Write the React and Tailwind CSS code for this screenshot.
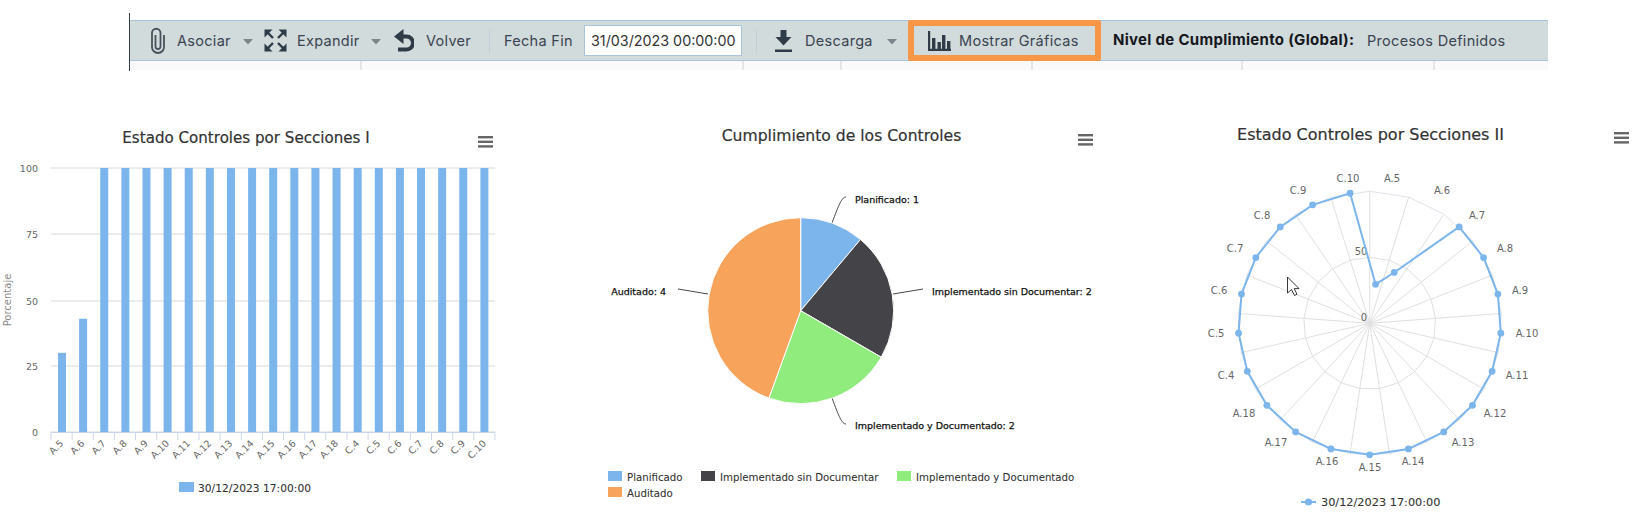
const BLUE = "#7cb5ec";
const DARK = "#434348";
const GREEN = "#90ed7d";
const ORANGE = "#f7a35c";

const CATEGORIES = [
  "A.5", "A.6", "A.7", "A.8", "A.9", "A.10", "A.11", "A.12", "A.13", "A.14", "A.15",
  "A.16", "A.17", "A.18", "C.4", "C.5", "C.6", "C.7", "C.8", "C.9", "C.10",
];
const VALUES = CATEGORIES.map((_, i) => (i === 0 ? 30 : i === 1 ? 42.9 : 100));

// posicion de las etiquetas del radar, en coordenadas de pagina
const RADAR_LABELS = [
  [1392, 178], [1442, 190], [1477, 215], [1505, 248], [1520, 290], [1527, 333], [1517, 375],
  [1495, 413], [1463, 442], [1413, 461], [1370, 467], [1327, 461], [1276, 442], [1244, 413],
  [1226, 375], [1216, 333], [1219, 290], [1235, 248], [1262, 215], [1298, 190], [1348, 178],
];

function Caret() {
  return (
    <svg width="10" height="6" viewBox="0 0 10 6" className="shrink-0 mt-[3px]">
      <polygon points="0,0 10,0 5,5.5" fill="#7b868c" />
    </svg>
  );
}

function ClipIcon() {
  return (
    <svg width="16" height="27" viewBox="0 0 16 27" className="shrink-0" fill="none" stroke="#47525a" strokeWidth="1.8">
      <path d="M5.5 8V19.5a2.5 2.5 0 0 0 5 0V6a4.2 4.2 0 0 0-8.5 0V20a6 6 0 0 0 12 0V8" />
    </svg>
  );
}

function ExpandIcon() {
  return (
    <svg width="23" height="23" viewBox="0 0 23 23" className="shrink-0" fill="#2f3b47" stroke="#2f3b47">
      {[0, 90, 180, 270].map((r) => (
        <g key={r} transform={`rotate(${r} 11.5 11.5)`}>
          <polygon points="0.5,0.5 8.5,0.5 0.5,8.5" strokeWidth="0" />
          <path d="M3 3L9 9" strokeWidth="2.4" />
        </g>
      ))}
    </svg>
  );
}

function BackIcon() {
  return (
    <svg width="20" height="23" viewBox="0 0 20 23" className="shrink-0">
      <polygon points="0,7.5 9.5,0 9.5,15" fill="#2f3b47" />
      <path d="M8 7.5H12.5a6 6 0 0 1 0 13H4" fill="none" stroke="#2f3b47" strokeWidth="4" />
    </svg>
  );
}

function DownloadIcon() {
  return (
    <svg width="17" height="22" viewBox="0 0 17 22" className="shrink-0">
      <polygon points="5.5,0 11.5,0 11.5,7 16.5,7 8.5,15.5 0.5,7 5.5,7" fill="#2f3b47" />
      <rect x="0" y="19.5" width="17" height="2.5" fill="#2f3b47" />
    </svg>
  );
}

function BarsIcon() {
  return (
    <svg width="23" height="20" viewBox="0 0 23 20" className="shrink-0" fill="#2f3b47">
      <rect x="0" y="0" width="2.2" height="20" />
      <rect x="0" y="17.8" width="23" height="2.2" />
      <rect x="4" y="7" width="3.4" height="11" />
      <rect x="9.5" y="11" width="3.4" height="7" />
      <rect x="14" y="4" width="3.4" height="14" />
      <rect x="19" y="10" width="3.4" height="8" />
    </svg>
  );
}

function Menu({ x, y }) {
  return (
    <g fill="#666">
      <rect x={x} y={y} width="15" height="2.4" />
      <rect x={x} y={y + 4.6} width="15" height="2.4" />
      <rect x={x} y={y + 9.2} width="15" height="2.4" />
    </g>
  );
}

function Title({ x, y, size, children }) {
  return (
    <text x={x} y={y} textAnchor="middle" fontSize={size} fill="#333" stroke="#333" strokeWidth="0.2">
      {children}
    </text>
  );
}

function BarChart() {
  const ticks = [
    [100, 168],
    [75, 234],
    [50, 301],
    [25, 366],
    [0, 432],
  ];
  return (
    <svg width="540" height="419" viewBox="0 110 540 419" className="shrink-0">
      <Title x="246" y="143" size="15.1">Estado Controles por Secciones I</Title>
      <Menu x={478} y={136} />
      <text transform="rotate(-90 11 300)" x="11" y="300" textAnchor="middle" fontSize="10" fill="#8a8a8a">
        Porcentaje
      </text>
      {ticks.map(([label, y]) => (
        <g key={label}>
          <line x1="51" x2="495" y1={y} y2={y} stroke="#e6e6e6" strokeWidth="1.3" />
          <text x="38" y={y + 3.5} textAnchor="end" fontSize="9.5" fill="#666">
            {label}
          </text>
        </g>
      ))}
      {VALUES.map((v, i) => {
        const h = (v / 100) * 264;
        return <rect key={i} x={58 + i * 21.12} y={432 - h} width="8" height={h} fill={BLUE} />;
      })}
      <line x1="51" x2="495" y1="432.5" y2="432.5" stroke="#ccd6eb" />
      {Array.from({ length: 22 }, (_, i) => (
        <line key={i} x1={51 + i * 21.14} x2={51 + i * 21.14} y1="432" y2="440" stroke="#ccd6eb" />
      ))}
      {CATEGORIES.map((c, i) => {
        const x = 51 + i * 21.14 + 13;
        return (
          <text key={c} x={x} y="444" transform={`rotate(-45 ${x} 444)`} textAnchor="end" fontSize="9.5" fill="#666">
            {c}
          </text>
        );
      })}
      <rect x="179" y="482" width="15" height="10" fill={BLUE} />
      <text x="198" y="491.5" fontSize="10.7" fill="#333" stroke="#333" strokeWidth="0.08">30/12/2023 17:00:00</text>
    </svg>
  );
}

function slicePath(cx, cy, r, from, to) {
  const a = ((from / 9) * 360 - 90) * (Math.PI / 180);
  const b = ((to / 9) * 360 - 90) * (Math.PI / 180);
  const large = to - from > 4.5 ? 1 : 0;
  return `M${cx} ${cy}L${cx + r * Math.cos(a)} ${cy + r * Math.sin(a)}A${r} ${r} 0 ${large} 1 ${cx + r * Math.cos(b)} ${cy + r * Math.sin(b)}Z`;
}

function PieChart() {
  const slices = [
    [0, 1, BLUE],
    [1, 3, DARK],
    [3, 5, GREEN],
    [5, 9, ORANGE],
  ];
  const labels = [
    ["Planificado: 1", 855, 203, "start"],
    ["Implementado sin Documentar: 2", 932, 295, "start"],
    ["Implementado y Documentado: 2", 855, 429, "start"],
    ["Auditado: 4", 666, 295, "end"],
  ];
  const legend = [
    [608, 471, BLUE, "Planificado"],
    [701, 471, DARK, "Implementado sin Documentar"],
    [897, 471, GREEN, "Implementado y Documentado"],
    [608, 487, ORANGE, "Auditado"],
  ];
  return (
    <svg width="560" height="419" viewBox="540 110 560 419" className="shrink-0">
      <Title x="841.5" y="141" size="15.6">Cumplimiento de los Controles</Title>
      <Menu x={1078} y={134} />
      <g fill="none" stroke="#333" strokeWidth="0.9">
        <path d="M832 223C839 204 842 197 846 197" />
        <path d="M893 294L923 289" />
        <path d="M832 398C839 417 842 424 846 424" />
        <path d="M708 294L678 289" />
      </g>
      {slices.map(([from, to, color]) => (
        <path key={color} d={slicePath(800.7, 310.7, 93, from, to)} fill={color} stroke="#fff" />
      ))}
      {labels.map(([text, x, y, anchor]) => (
        <text key={text} x={x} y={y} textAnchor={anchor} fontSize="9.5" fill="#111" stroke="#111" strokeWidth="0.25">
          {text}
        </text>
      ))}
      {legend.map(([x, y, color, text]) => (
        <g key={text}>
          <rect x={x} y={y} width="14" height="10" fill={color} />
          <text x={x + 19} y={y + 9.5} fontSize="10.2" fill="#333" stroke="#333" strokeWidth="0.08">
            {text}
          </text>
        </g>
      ))}
    </svg>
  );
}

function polar(r, deg) {
  const a = (deg - 90) * (Math.PI / 180);
  return [1369.7 + r * Math.cos(a), 323.3 + r * Math.sin(a)];
}

function RadarChart() {
  const step = 360 / 21;
  const ring = (r) =>
    Array.from({ length: 21 }, (_, i) => polar(r, i * step).join(",")).join(" ");
  const points = VALUES.map((v, i) => polar((v / 100) * 131.5, step / 2 + i * step));
  return (
    <svg width="542" height="419" viewBox="1100 110 542 419" className="shrink-0">
      <Title x="1370.5" y="140" size="16">Estado Controles por Secciones II</Title>
      <Menu x={1614} y={132} />
      {Array.from({ length: 21 }, (_, i) => {
        const [x, y] = polar(132, i * step);
        return <line key={i} x1="1369.7" y1="323.3" x2={x} y2={y} stroke="#e0e0e0" />;
      })}
      <polygon points={ring(66)} fill="none" stroke="#e0e0e0" />
      <polygon points={ring(132)} fill="none" stroke="#dfe4ea" />
      <text x="1361" y="255" textAnchor="middle" fontSize="10" fill="#666">50</text>
      <text x="1364" y="321" textAnchor="middle" fontSize="10" fill="#666">0</text>
      <polygon points={points.map((p) => p.join(",")).join(" ")} fill="none" stroke={BLUE} strokeWidth="2" />
      {points.map(([x, y], i) => (
        <circle key={i} cx={x} cy={y} r="3.4" fill={BLUE} />
      ))}
      {CATEGORIES.map((c, i) => (
        <text key={c} x={RADAR_LABELS[i][0]} y={RADAR_LABELS[i][1] + 3.5} textAnchor="middle" fontSize="10" fill="#666">
          {c}
        </text>
      ))}
      <path
        d="M1287.5 277V293L1291.5 289.5L1294.5 295.5L1297 294.3L1294.2 288.6H1299Z"
        fill="#fff"
        stroke="#222"
        strokeWidth="0.9"
      />
      <line x1="1301" x2="1316" y1="502" y2="502" stroke={BLUE} strokeWidth="2" />
      <circle cx="1308.5" cy="502" r="3.6" fill={BLUE} />
      <text x="1321" y="505.5" fontSize="11.3" fill="#333" stroke="#333" strokeWidth="0.08">30/12/2023 17:00:00</text>
    </svg>
  );
}

export default function App() {
  const cols = ["w-[232px]", "w-[382px]", "w-[98px]", "w-[191px]", "w-[210px]", "w-[192px]"];

  return (
    <div className="w-[1642px] h-[529px] overflow-hidden bg-white font-['DejaVu_Sans',sans-serif]">
      <div className="ml-[129px] mt-[13px] w-[1419px] h-[58px] pt-[7px] border-l border-[#333f48]">
        <div className="flex items-center h-[41px] border-y border-[#a9c4dc] bg-[#d1dbdc] font-['Inter',sans-serif] text-[14.5px] tracking-[0.3px] text-[#3b4350]">
          <div className="ml-[20px]"><ClipIcon /></div>
          <span className="ml-[11px] w-[66px]">Asociar</span>
          <Caret />
          <div className="ml-[11px]"><ExpandIcon /></div>
          <span className="ml-[10px] w-[74px]">Expandir</span>
          <Caret />
          <div className="ml-[13px]"><BackIcon /></div>
          <span className="ml-[12px] w-[63px]">Volver</span>
          <div className="w-px h-[24px] bg-[#c2d0d8]" />
          <span className="ml-[14px] w-[80px]">Fecha Fin</span>
          <div className="flex items-center w-[158px] h-[31px] pl-[6px] bg-white border border-[#a9c4dc] text-[14.3px] text-[#333] tracking-normal">
            31/03/2023 00:00:00
          </div>
          <div className="ml-[14px] w-px h-[24px] bg-[#c2d0d8]" />
          <div className="ml-[18px]"><DownloadIcon /></div>
          <span className="ml-[13px] w-[82px]">Descarga</span>
          <Caret />
          <div className="flex items-center ml-[11px] w-[193px] h-[41px] pl-[14px] border-[6px] border-[#f79646] rounded-[2px]">
            <BarsIcon />
            <span className="ml-[8px] whitespace-nowrap">Mostrar Gráficas</span>
          </div>
          <span className="ml-[12px] w-[254px] whitespace-nowrap font-bold text-[15px] text-[#15171c]">Nivel de Cumplimiento (Global):</span>
          <span className="whitespace-nowrap">Procesos Definidos</span>
        </div>
        <div className="flex h-[9px] bg-[#fafafa]">
          {cols.map((c) => (
            <div key={c} className={`${c} border-r-2 border-[#e6e6e6]`} />
          ))}
        </div>
      </div>
      <div className="flex mt-[39px]">
        <BarChart />
        <PieChart />
        <RadarChart />
      </div>
    </div>
  );
}
